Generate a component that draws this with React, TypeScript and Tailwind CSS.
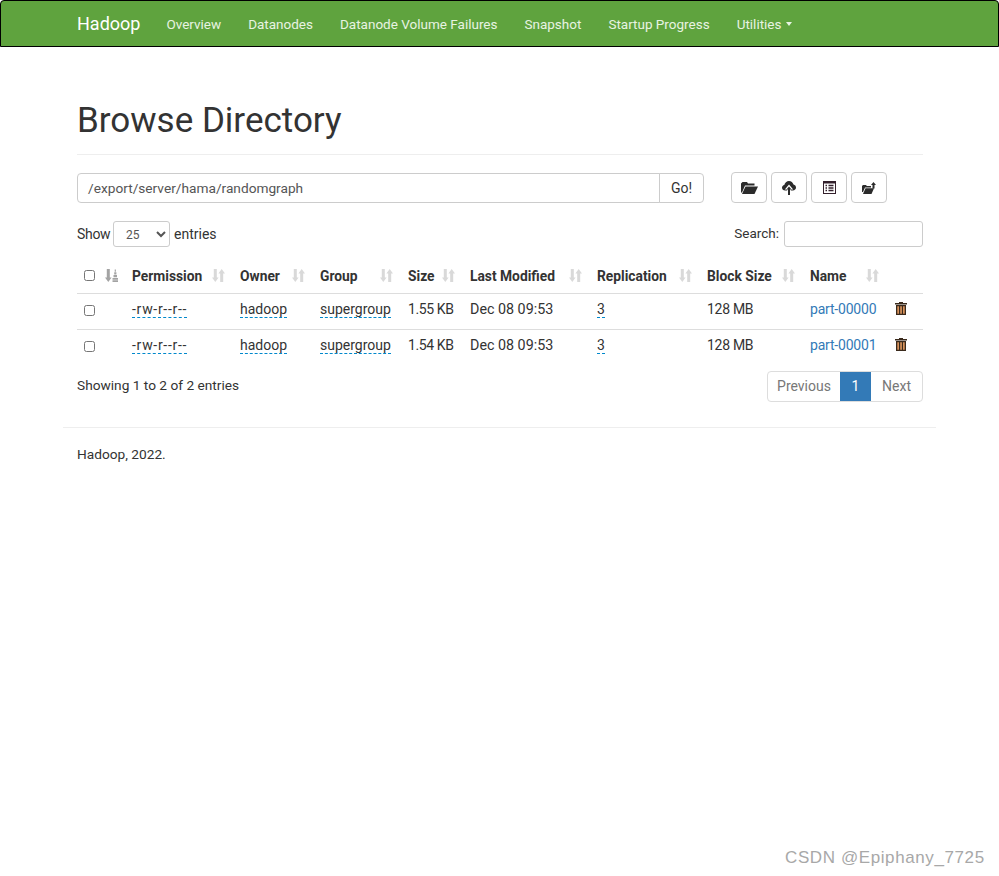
const navLinks = ["Overview", "Datanodes", "Datanode Volume Failures", "Snapshot", "Startup Progress"];

const files = [
  { name: "part-00000", size: "1.55 KB" },
  { name: "part-00001", size: "1.54 KB" },
];

const columns = ["Permission", "Owner", "Group", "Size", "Last Modified", "Replication", "Block Size", "Name"];

function SortIcon({ active }: { active?: boolean }) {
  return (
    <svg width="13" height="13" viewBox="0 0 13 13" className={active ? "shrink-0 text-[#a3a3a3]" : "shrink-0 text-[#d9d9d9]"} fill="currentColor">
      <path d="M1.800 0h3v8.500h1.800L3.300 13 0 8.500h1.800z" />
      {active ? (
        <path d="M7.500 9h5.500v1.700H7.500zM7.500 11.300h5.500V13H7.500zM8.500 6h3.500v2.300H8.500zM9.200 3.200h2.200v2.200H9.200zM9.700 0.500h1.200v2.200H9.700z" />
      ) : (
        <path d="M8.200 13h3V4.500H13L9.700 0 6.400 4.500h1.800z" />
      )}
    </svg>
  );
}

function FolderOpenIcon() {
  return (
    <svg width="17" height="12" viewBox="0 0 17 12" fill="#2b2b2b">
      <path d="M1.500 0h4.500l1 1.500h6.500V3.500H4L1 10.500H0V1.500z" />
      <path d="M4.500 4.500H17L13.500 12H1z" />
    </svg>
  );
}

function FolderUpIcon() {
  return (
    <svg width="14" height="12" viewBox="0 0 14 12" fill="#2b2b2b">
      <path d="M1 3h3l.8 1h4.200v1.500H3L1 10H0V4z" />
      <path d="M3.500 6.300H12L9.500 12H1z" />
      <path d="M11.500 0 14 3h-1.500v3.500h-2V3H9z" />
    </svg>
  );
}

function CloudUploadIcon() {
  return (
    <svg width="14" height="14" viewBox="0 0 14 14">
      <path fill="#2b2b2b" d="M3.200 9.500C1.300 9.500 0 8.300 0 6.700c0-1.400 1-2.500 2.300-2.700C2.800 1.700 4.700 0 7 0c2.200 0 4 1.500 4.500 3.600C13 3.900 14 5.100 14 6.600c0 1.700-1.300 2.900-3.200 2.900z" />
      <path fill="#ffffff" d="M7 3.500 2.800 8.500h2.400V14h3.600V8.500h2.400z" />
      <path fill="#2b2b2b" d="M7 5.500 4.500 8.500h1.500V14h2V8.500h1.500z" />
    </svg>
  );
}

function ListAltIcon() {
  return (
    <svg width="13" height="13" viewBox="0 0 13 13" fill="none">
      <rect x="0.500" y="0.500" width="12" height="12" stroke="#33202c" />
      <rect x="1" y="1" width="11" height="1.500" fill="#33202c" />
      <path d="M2.500 4.500h1.500M2.500 7h1.500M2.500 9.500h1.500M5.500 4.500h5M5.500 7h5M5.500 9.500h5" stroke="#33202c" strokeWidth="1.300" />
    </svg>
  );
}

function TrashIcon() {
  return (
    <svg width="12" height="13" viewBox="0 0 12 13" className="block">
      <path fill="#3a2a1c" d="M4 0h4v1h4v1.500H0V1h4z" />
      <path fill="#3a2a1c" d="M1 3h10v10H1z" />
      <path fill="#d8935c" d="M2.300 4.200h1.700v7.500H2.300zM5.200 4.200h1.700v7.500H5.200zM8 4.200h1.700v7.500H8z" />
    </svg>
  );
}

function Dashed({ children, className }: { children: string; className?: string }) {
  return <span className={"border-b border-dashed border-[#0088cc] " + (className ?? "")}>{children}</span>;
}

function ToolButton({ children }: { children: React.ReactNode }) {
  return (
    <button className="flex h-[31px] w-[36px] items-center justify-center rounded-[4px] border border-[#cccccc] bg-white text-[#333333]">
      {children}
    </button>
  );
}

export default function App() {
  return (
    <div className="relative h-[876px] overflow-hidden bg-white font-['Roboto',sans-serif] text-[14px] leading-[20px] text-[#333333]">
      {/* navbar */}
      <nav className="flex h-[47px] items-center rounded-t-[4px] border border-black bg-[#5fa33e] pl-[76px]">
        <span className="mr-[26px] text-[18px] text-white">Hadoop</span>
        <div className="flex gap-[27px] text-[13.500px] text-[#e8f3e2]">
          {navLinks.map((link) => (
            <span key={link}>{link}</span>
          ))}
          <span className="flex items-center gap-[4px]">
            Utilities
            <span className="mt-[1px] border-x-[3.500px] border-t-[4px] border-x-transparent border-t-[#e8f3e2]" />
          </span>
        </div>
      </nav>

      <main className="mx-[77px] w-[846px]">
        <h1 className="mt-[51px] border-b border-[#eeeeee] pb-[11px] text-[35px] leading-[45px] text-[#333333]">
          Browse Directory
        </h1>

        {/* path bar */}
        <div className="mt-[17px] flex items-center">
          <div className="flex h-[30px] w-[583px] items-center rounded-l-[4px] border border-[#cccccc] px-[10px] text-[13.700px] text-[#555555]">
            /export/server/hama/randomgraph
          </div>
          <button className="-ml-px flex h-[30px] w-[45px] items-center justify-center rounded-r-[4px] border border-[#cccccc]">
            Go!
          </button>
          <div className="ml-[27px] flex gap-[4px]">
            <ToolButton><FolderOpenIcon /></ToolButton>
            <ToolButton><CloudUploadIcon /></ToolButton>
            <ToolButton><ListAltIcon /></ToolButton>
            <ToolButton><FolderUpIcon /></ToolButton>
          </div>
        </div>

        {/* length + search */}
        <div className="mt-[18px] flex items-center justify-between">
          <div className="flex items-center">
            <span className="w-[36px] tracking-[-0.3px]">Show</span>
            <select className="h-[26px] w-[57px] rounded-[3px] border border-[#cccccc] bg-white pl-[8px] pt-[2px] text-[12px] text-[#555555]" defaultValue="25">
              <option>25</option>
            </select>
            <span className="ml-[4px]">entries</span>
          </div>
          <div className="flex items-center gap-[5px] text-[13.500px]">
            <span className="-mt-[2px]">Search:</span>
            <div className="h-[26px] w-[139px] rounded-[3px] border border-[#cccccc]" />
          </div>
        </div>

        {/* file table */}
        <table className="mt-[10px] w-[846px] table-fixed border-collapse">
          <colgroup>
            <col className="w-[47px]" />
            <col className="w-[108px]" />
            <col className="w-[80px]" />
            <col className="w-[88px]" />
            <col className="w-[62px]" />
            <col className="w-[127px]" />
            <col className="w-[110px]" />
            <col className="w-[103px]" />
            <col className="w-[84px]" />
            <col className="w-[37px]" />
          </colgroup>
          <thead>
            <tr className="h-[36px] border-b border-[#dddddd]">
              <th className="pl-[7px] pt-[2px] text-left">
                <div className="flex items-center gap-[10px]">
                  <input type="checkbox" className="size-[11px]" />
                  <SortIcon active />
                </div>
              </th>
              {columns.map((col) => (
                <th key={col} className="pl-[8px] pr-[7px] pt-[2px] text-left text-[13.800px] font-bold">
                  <div className="flex items-center justify-between whitespace-nowrap">
                    {col}
                    <SortIcon />
                  </div>
                </th>
              ))}
              <th />
            </tr>
          </thead>
          <tbody>
            {files.map((file, i) => (
              <tr key={file.name} className={i === 0 ? "h-[36px] border-b border-[#dddddd]" : "h-[36px]"}>
                <td className="pl-[7px] align-top pt-[11px]">
                  <input type="checkbox" className="block size-[11px]" />
                </td>
                <td className="whitespace-nowrap px-[8px] align-top pt-[5px]"><Dashed className="tracking-[0.7px]">-rw-r--r--</Dashed></td>
                <td className="whitespace-nowrap px-[8px] align-top pt-[5px]"><Dashed>hadoop</Dashed></td>
                <td className="whitespace-nowrap px-[8px] align-top pt-[5px]"><Dashed>supergroup</Dashed></td>
                <td className="whitespace-nowrap px-[8px] align-top pt-[5px] tracking-[-0.4px]">{file.size}</td>
                <td className="whitespace-nowrap px-[8px] align-top pt-[5px] text-[14.300px]">Dec 08 09:53</td>
                <td className="whitespace-nowrap px-[8px] align-top pt-[5px]"><Dashed>3</Dashed></td>
                <td className="whitespace-nowrap px-[8px] align-top pt-[5px] tracking-[-0.3px]">128 MB</td>
                <td className="whitespace-nowrap px-[8px] align-top pt-[5px] tracking-[-0.2px] text-[#337ab7]">{file.name}</td>
                <td className="pl-[9px] align-top pt-[8px]"><TrashIcon /></td>
              </tr>
            ))}
          </tbody>
        </table>

        {/* info + pager */}
        <div className="mt-[6px] flex items-start justify-between">
          <div className="mt-[4px] text-[13.700px]">Showing 1 to 2 of 2 entries</div>
          <div className="flex h-[31px] overflow-hidden rounded-[4px] border border-[#dddddd]">
            <span className="flex w-[72px] items-center justify-center pb-[2px] text-[#777777]">Previous</span>
            <span className="flex w-[31px] items-center justify-center bg-[#337ab7] pb-[2px] text-white">1</span>
            <span className="flex w-[51px] items-center justify-center pb-[2px] text-[#777777]">Next</span>
          </div>
        </div>
      </main>

      <hr className="mx-[63px] mt-[25px] border-[#eeeeee]" />
      <p className="ml-[77px] mt-[16px] text-[13.700px]">Hadoop, 2022.</p>

      {/* watermark */}
      <span className="absolute left-[785px] top-[848px] font-['Liberation_Sans',sans-serif] text-[17px] tracking-[0.6px] text-[#a8a8a8]">
        CSDN @Epiphany_7725
      </span>
    </div>
  );
}
